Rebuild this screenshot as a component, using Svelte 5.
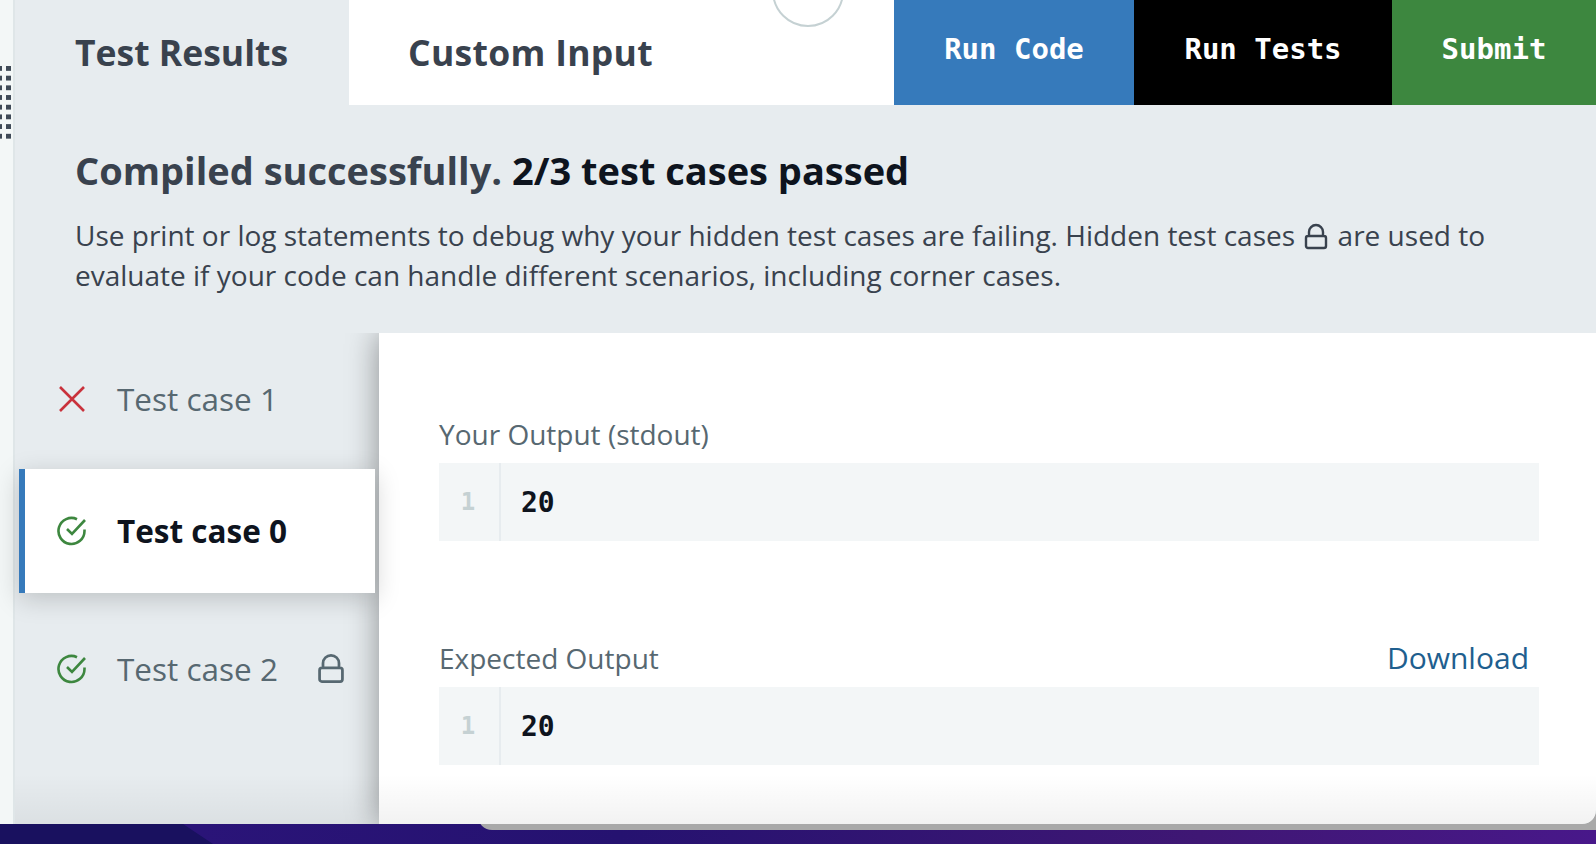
<script>
  let cases = [
    { name: 'Test case 1', status: 'fail', active: false, locked: false },
    { name: 'Test case 0', status: 'pass', active: true, locked: false },
    { name: 'Test case 2', status: 'pass', active: false, locked: true }
  ];
</script>

<div class="page">
  <div class="window">
    <div class="strip"></div>
    <div class="grip"></div>
    <div class="main">
      <div class="top">
        <div class="tab current">Test Results</div>
        <div class="tab other">Custom Input</div>
        <div class="ring"></div>
        <button class="run">Run Code</button>
        <button class="tests">Run Tests</button>
        <button class="submit">Submit</button>
      </div>

      <div class="summary">
        <h2>Compiled successfully. <span>2/3 test cases passed</span></h2>
        <p>
          Use print or log statements to debug why your hidden test cases are failing. Hidden test cases
          <svg class="lock inline" viewBox="0 0 24 28" width="24" height="28"><path d="M5 13V9a7 7 0 0 1 14 0v4M4 13h16a2 2 0 0 1 2 2v8a2 2 0 0 1-2 2H4a2 2 0 0 1-2-2v-8a2 2 0 0 1 2-2z" /></svg>
          are used to evaluate if your code can handle different scenarios, including corner cases.
        </p>
      </div>

      <div class="results">
        <div class="cases">
          {#each cases as c}
            <div class="case" class:active={c.active}>
              {#if c.status === 'fail'}
                <svg class="icon" viewBox="0 0 30 30" width="30" height="30"><path class="cross" d="M3 3l24 24M27 3L3 27" /></svg>
              {:else}
                <svg class="icon" viewBox="0 0 30 30" width="30" height="30"><path class="check" d="M27.5 13.5v1.5a13 13 0 1 1-7.5-11.8M28 4L15 18l-5-5" /></svg>
              {/if}
              <span>{c.name}</span>
              {#if c.locked}
                <svg class="lock side" viewBox="0 0 24 28" width="28" height="32"><path d="M5 13V9a7 7 0 0 1 14 0v4M4 13h16a2 2 0 0 1 2 2v8a2 2 0 0 1-2 2H4a2 2 0 0 1-2-2v-8a2 2 0 0 1 2-2z" /></svg>
              {/if}
            </div>
          {/each}
        </div>

        <div class="output">
          <div class="label first"><span>Your Output (stdout)</span></div>
          <div class="code"><div class="num">1</div><div class="val">20</div></div>
          <div class="label"><span>Expected Output</span><a href="#download">Download</a></div>
          <div class="code"><div class="num">1</div><div class="val">20</div></div>
        </div>
        <div class="fade"></div>
      </div>
    </div>
  </div>
  <div class="wallpaper">
    <div class="dark"></div>
    <div class="edge"></div>
  </div>
</div>

<style>
  :global(body) {
    margin: 0;
    background: #2a1278;
  }

  .page {
    width: 1596px;
    height: 844px;
    overflow: hidden;
    display: flex;
    flex-direction: column;
    font-family: "Open Sans", "Liberation Sans", sans-serif;
    position: relative;
  }

  .window {
    height: 824px;
    display: flex;
    position: relative;
    z-index: 1;
    overflow: hidden;
    border-radius: 0 0 14px 0;
  }

  .strip {
    width: 13px;
    background: #f3f7f7;
    border-right: 2px solid #dfe6e8;
  }

  .grip {
    position: absolute;
    left: 0;
    top: 66px;
    width: 12px;
    height: 77px;
    background-image: linear-gradient(#3f4a57 0 5px, transparent 5px), linear-gradient(#3f4a57 0 5px, transparent 5px);
    background-size: 2px 9.7px, 5px 9.7px;
    background-position: 0 0, 6px 0;
    background-repeat: repeat-y;
  }

  .main {
    flex: 1;
    background: #e7ecef;
    display: flex;
    flex-direction: column;
    min-width: 0;
  }

  .top {
    display: flex;
    height: 105px;
    position: relative;
  }

  .tab {
    font-size: 35.5px;
    font-weight: 700;
    color: #39424e;
    line-height: 105px;
  }

  .current {
    width: 274px;
    padding-left: 60px;
  }

  .other {
    width: 486px;
    padding-left: 59px;
    background: #fff;
    letter-spacing: 0.3px;
  }

  .ring {
    position: absolute;
    left: 757px;
    top: -45px;
    width: 68px;
    height: 68px;
    border: 2px solid #c5d1d3;
    border-radius: 50%;
    background: #fff;
  }

  button {
    border: none;
    color: #fff;
    font-family: "DejaVu Sans Mono", monospace;
    font-weight: 700;
    font-size: 29px;
    padding: 0 0 8px;
  }

  .run {
    width: 240px;
    background: #367abb;
  }

  .tests {
    width: 258px;
    background: #000;
  }

  .submit {
    flex: 1;
    background: #3d873f;
  }

  .summary {
    height: 228px;
    padding-left: 60px;
    box-sizing: border-box;
    color: #39424e;
  }

  h2 {
    margin: 0;
    padding-top: 39px;
    font-size: 38px;
    line-height: 52px;
    font-weight: 700;
  }

  h2 span {
    color: #0e141e;
  }

  .summary p {
    margin: 0;
    padding-top: 20px;
    width: 1430px;
    font-size: 28px;
    line-height: 39.5px;
  }

  .lock {
    fill: none;
    stroke-width: 2.4;
  }

  .lock.inline {
    stroke: #39424e;
    vertical-align: -5px;
    margin: 0 2px;
  }

  .lock.side {
    stroke: #576871;
    position: absolute;
    left: 302px;
    top: 46px;
  }

  .results {
    flex: 1;
    display: flex;
    position: relative;
    min-height: 0;
  }

  .cases {
    width: 364px;
    padding-top: 4px;
    box-sizing: border-box;
  }

  .case {
    height: 124px;
    display: flex;
    align-items: center;
    padding-left: 42px;
    padding-bottom: 2px;
    font-size: 31.5px;
    color: #576871;
    position: relative;
    box-sizing: border-box;
  }

  .case .icon {
    margin-right: 30px;
    margin-top: 2px;
    fill: none;
  }

  .cross {
    stroke: #c9323c;
    stroke-width: 2.6;
  }

  .check {
    stroke: #3d873f;
    stroke-width: 2.6;
  }

  .case.active {
    margin: 8px 0 14px 4px;
    width: 356px;
    padding-left: 32px;
    background: #fff;
    border-left: 6px solid #367abb;
    color: #0e141e;
    font-weight: 700;
    box-shadow: 0 6px 24px rgba(0, 0, 0, 0.18);
    z-index: 2;
  }

  .output {
    flex: 1;
    background: #fff;
    padding: 0 57px 0 60px;
    box-shadow: 0 0 30px rgba(0, 0, 0, 0.4);
    clip-path: inset(0 0 0 -40px);
    z-index: 1;
  }

  .label {
    display: flex;
    justify-content: space-between;
    align-items: center;
    height: 34px;
    padding-bottom: 2px;
    margin-top: 100px;
    margin-bottom: 10px;
    padding-right: 10px;
    font-size: 28px;
    color: #576871;
  }

  .label.first {
    margin-top: 84px;
  }

  .label a {
    color: #1f5f8f;
    text-decoration: none;
    font-size: 30px;
    margin-bottom: 2px;
  }

  .code {
    display: flex;
    height: 78px;
    background: #f3f6f7;
    align-items: center;
  }

  .num {
    width: 60px;
    height: 100%;
    box-sizing: content-box;
    border-right: 2px solid #e7ecef;
    display: flex;
    align-items: center;
    justify-content: center;
    padding-right: 0;
    color: #c5d1d3;
    font-family: "DejaVu Sans Mono", monospace;
    font-weight: 700;
    font-size: 24px;
    text-indent: -2px;
  }

  .val {
    padding-left: 20px;
    font-family: "DejaVu Sans Mono", monospace;
    font-weight: 700;
    font-size: 28px;
    color: #0e141e;
  }

  .fade {
    position: absolute;
    left: 0;
    right: 0;
    bottom: 0;
    height: 50px;
    background: linear-gradient(rgba(0, 0, 0, 0), rgba(0, 0, 0, 0.05));
    pointer-events: none;
    z-index: 3;
  }

  .wallpaper {
    flex: 1;
    background: linear-gradient(90deg, #2a1478 200px, #251270 620px, #3f1774 1200px, #48188a);
    position: relative;
  }

  .dark {
    position: absolute;
    left: 0;
    top: 0;
    bottom: 0;
    width: 213px;
    background: #19115f;
    clip-path: polygon(0 0, 183px 0, 213px 100%, 0 100%);
  }

  .edge {
    position: absolute;
    left: 478px;
    right: 0;
    top: -20px;
    height: 26px;
    background: #a9a9a9;
    border-radius: 0 0 0 14px;
  }
</style>
